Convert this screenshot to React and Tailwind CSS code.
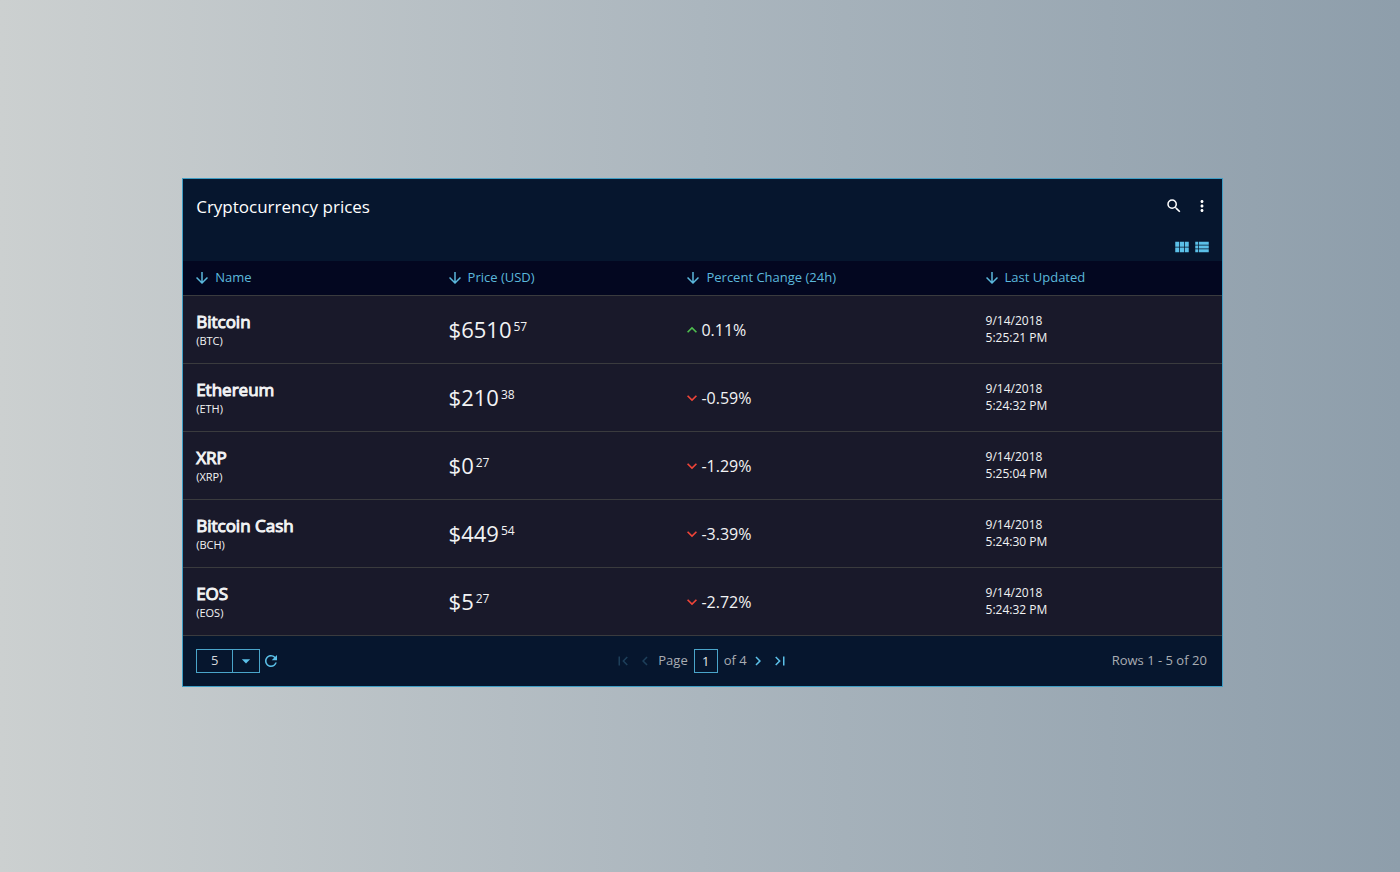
// src/App.jsx
import React, { useState } from 'react';
import {
  MdArrowDownward,
  MdArrowDropDown,
  MdChevronLeft,
  MdChevronRight,
  MdExpandLess,
  MdExpandMore,
  MdFirstPage,
  MdLastPage,
  MdMoreVert,
  MdRefresh,
  MdSearch,
  MdViewList,
  MdViewModule,
} from 'react-icons/md';

const columns = [
  { label: 'Name', width: 'w-[24.3%]' },
  { label: 'Price (USD)', width: 'w-[23%]' },
  { label: 'Percent Change (24h)', width: 'w-[28.7%]' },
  { label: 'Last Updated', width: 'w-[24%]' },
];

const coins = [
  { name: 'Bitcoin', symbol: 'BTC', whole: '6510', cents: '57', change: 0.11, date: '9/14/2018', time: '5:25:21 PM' },
  { name: 'Ethereum', symbol: 'ETH', whole: '210', cents: '38', change: -0.59, date: '9/14/2018', time: '5:24:32 PM' },
  { name: 'XRP', symbol: 'XRP', whole: '0', cents: '27', change: -1.29, date: '9/14/2018', time: '5:25:04 PM' },
  { name: 'Bitcoin Cash', symbol: 'BCH', whole: '449', cents: '54', change: -3.39, date: '9/14/2018', time: '5:24:30 PM' },
  { name: 'EOS', symbol: 'EOS', whole: '5', cents: '27', change: -2.72, date: '9/14/2018', time: '5:24:32 PM' },
];

const PanelHeader = () => (
  <header className="flex items-start justify-between h-[82px] pl-[13px] pr-[11px] pt-4">
    <h1 className="text-[17px] leading-6 text-white">Cryptocurrency prices</h1>
    <div className="flex flex-col items-end gap-[23px] pt-0.5">
      <div className="flex gap-2.5 text-white">
        <button aria-label="Search"><MdSearch size={18} /></button>
        <button aria-label="More options"><MdMoreVert size={18} /></button>
      </div>
      <div className="flex gap-0.5 text-[#5bc0e8]">
        <button aria-label="Grid view"><MdViewModule size={18} /></button>
        <button aria-label="List view"><MdViewList size={18} /></button>
      </div>
    </div>
  </header>
);

const CoinRow = ({ coin }) => (
  <tr className="h-[68px] border-t border-[#3a3b3e]">
    <td className="pl-[13px] pt-[3px]">
      <p className="text-[17px] leading-5 [-webkit-text-stroke:1px]">{coin.name}</p>
      <p className="text-[11px] leading-[18px]">({coin.symbol})</p>
    </td>
    <td className="pl-[13px]">
      <div className="flex items-start gap-0.5">
        <span className="text-[22px] leading-7">${coin.whole}</span>
        <span className="text-xs leading-6">{coin.cents}</span>
      </div>
    </td>
    <td className="pl-[13px] pt-0.5">
      <div className="flex items-center text-base">
        {coin.change > 0
          ? <MdExpandLess size={20} className="-ml-[5px] -mr-px text-[#4fc04f]" />
          : <MdExpandMore size={20} className="-ml-[5px] -mr-px text-[#f04438]" />}
        {coin.change}%
      </div>
    </td>
    <td className="pl-[13px] text-xs leading-[17px]">
      <p>{coin.date}</p>
      <p>{coin.time}</p>
    </td>
  </tr>
);

const PanelFooter = () => {
  const [pageSize, setPageSize] = useState('5');
  const [page, setPage] = useState('1');

  return (
    <footer className="grid grid-cols-3 items-center h-[51px] pl-[13px] pr-[15px] border-t border-[#3a3b3e] text-[13px] text-[#a9adb3]">
      <div className="flex items-center gap-0.5 text-[#5bc0e8]">
        <label className="grid grid-cols-[36px_26px] h-6 border border-[#4aa5ca]">
          <select
            aria-label="Rows per page"
            value={pageSize}
            onChange={e => setPageSize(e.target.value)}
            className="col-start-1 row-start-1 appearance-none text-center text-[#d5d8db] border-r border-[#4aa5ca]"
          >
            <option>5</option>
            <option>10</option>
            <option>20</option>
          </select>
          <MdArrowDropDown size={20} className="col-start-2 row-start-1 place-self-center" />
        </label>
        <button aria-label="Refresh"><MdRefresh size={18} /></button>
      </div>
      <nav className="flex items-center justify-center text-[#5bc0e8]">
        <button aria-label="First page" disabled className="mr-1 text-[#1d3f5a]"><MdFirstPage size={18} /></button>
        <button aria-label="Previous page" disabled className="mr-1 text-[#1d3f5a]"><MdChevronLeft size={18} /></button>
        <label htmlFor="page" className="text-[#a9adb3]">Page</label>
        <input
          id="page"
          value={page}
          onChange={e => setPage(e.target.value)}
          className="w-6 h-6 mx-1.5 border border-[#4aa5ca] text-center text-[#e4e6e8]"
        />
        <span className="text-[#a9adb3]">of 4</span>
        <button aria-label="Next page" className="ml-0.5"><MdChevronRight size={18} /></button>
        <button aria-label="Last page" className="ml-1"><MdLastPage size={18} /></button>
      </nav>
      <p className="text-right">Rows 1 - 5 of 20</p>
    </footer>
  );
};

const App = () => (
  <main className="flex items-start justify-center min-h-screen pt-[178px] pl-[5px] bg-linear-to-r from-[#ccd0d0] via-[#abb6be] to-[#8e9eab] font-['Open_Sans','Noto_Sans',sans-serif]">
    <section className="w-[74.6%] bg-[#06162e] border border-[#3f9dc4]">
      <PanelHeader />
      <table className="w-full table-fixed text-left text-[#f2f3f4]">
        <thead>
          <tr className="h-[34px] bg-[#030720]">
            {columns.map(col => (
              <th key={col.label} className={`${col.width} pl-[13px] font-normal text-[13px]`}>
                <button className="flex items-center gap-1 text-[#5bb8dc]">
                  <MdArrowDownward size={18} className="-ml-[3px]" /> {col.label}
                </button>
              </th>
            ))}
          </tr>
        </thead>
        <tbody className="bg-[#19192a]">
          {coins.map(coin => <CoinRow key={coin.symbol} coin={coin} />)}
        </tbody>
      </table>
      <PanelFooter />
    </section>
  </main>
);

export default App;
